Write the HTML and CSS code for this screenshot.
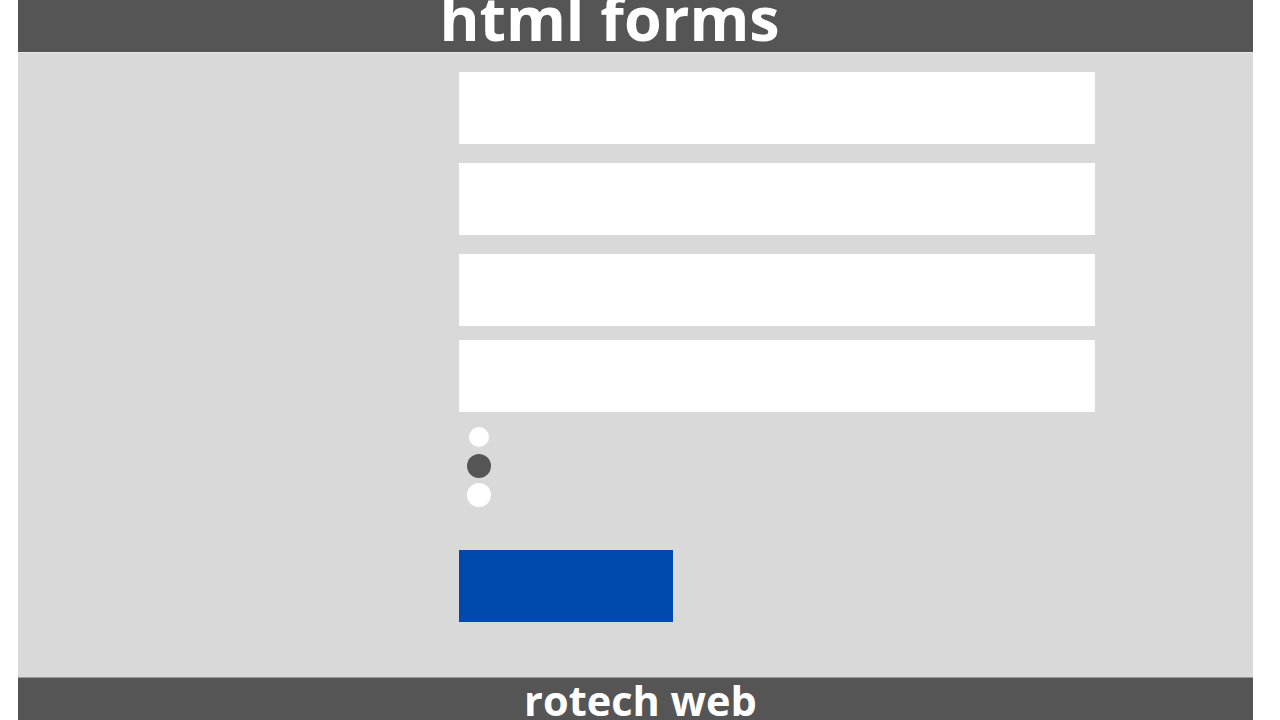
FILE: index.html
```html
<!DOCTYPE html>
<html lang="en">
<head>
    <meta charset="UTF-8">
    <meta name="viewport" content="width=device-width, initial-scale=1.0">
    <title>html forms</title>
    <link rel="stylesheet" href="styles.css">
</head>
<body>
    <div class="page">
        <header class="top">
            <h1 class="title">html forms</h1>
        </header>
        <main class="content">
            <form class="form">
                <input class="field" type="text">
                <input class="field" type="text">
                <input class="field" type="text">
                <input class="field field-last" type="text">
                <div class="choices">
                    <span class="dot dot-small"></span>
                    <span class="dot dot-on"></span>
                    <span class="dot"></span>
                </div>
                <button class="send" type="button"></button>
            </form>
        </main>
        <footer class="bottom">
            <div class="brand">rotech web</div>
        </footer>
    </div>
</body>
</html>
```

FILE: styles.css
```css
body {
    margin: 0;
    background: #ffffff;
    font-family: "Open Sans", "Liberation Sans", sans-serif;
    overflow: hidden;
}
.page {
    width: 1235px;
    height: 720px;
    margin-left: 18px;
    display: flex;
    flex-direction: column;
}
.top {
    height: 53px;
    background: #555555;
    border-bottom: 1px solid #e6e6e6;
    box-sizing: border-box;
    display: flex;
    justify-content: center;
    align-items: flex-end;
    overflow: hidden;
}
.title {
    margin: 0 52px 0 0;
    color: #ffffff;
    font-size: 61px;
    font-weight: 700;
    line-height: 1;
    position: relative;
    top: -4px;
}
.content {
    flex: 1;
    background: #d9d9d9;
    padding: 19px 0 0 441px;
}
.form {
    display: flex;
    flex-direction: column;
    align-items: flex-start;
}
.field {
    width: 636px;
    height: 72px;
    border: none;
    background: #ffffff;
    margin: 0 0 19px 0;
    padding: 0;
}
.field-last {
    margin-top: -5px;
    margin-bottom: 15px;
}
.choices {
    display: flex;
    flex-direction: column;
    padding-left: 8px;
}
.dot {
    width: 24px;
    height: 24px;
    border-radius: 50%;
    background: #ffffff;
    display: block;
}
.dot-small {
    width: 20px;
    height: 20px;
    margin: 0 0 7px 2px;
}
.dot-on {
    background: #555555;
    margin-bottom: 5px;
}
.send {
    width: 214px;
    height: 72px;
    margin-top: 43px;
    border: none;
    background: #004aad;
}
.bottom {
    height: 43px;
    background: #555555;
    border-top: 1px solid #9a9a9a;
    box-sizing: border-box;
    display: flex;
    justify-content: center;
    overflow: hidden;
}
.brand {
    color: #ffffff;
    font-size: 41.5px;
    font-weight: 700;
    line-height: 1;
    margin: 2px 0 0 10px;
}
```
